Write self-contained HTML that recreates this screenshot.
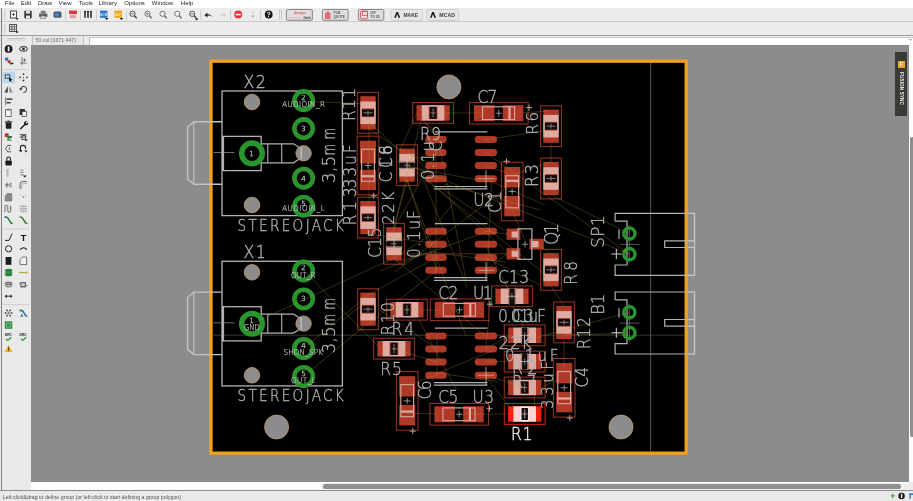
<!DOCTYPE html>
<html lang="en"><head><meta charset="utf-8"><title>EAGLE board editor</title>
<style>
html,body{margin:0;padding:0;}
body{width:913px;height:501px;overflow:hidden;background:#ebebeb;position:relative;font-family:"Liberation Sans",sans-serif;}
.abs{position:absolute;}
#menubar{left:0;top:0;width:913px;height:7.5px;background:#fff;}
#menubar span{position:absolute;top:0.2px;font-size:6px;line-height:7px;color:#1e1e1e;white-space:nowrap;}
#tb1{left:0;top:7.5px;width:913px;height:13.6px;background:#ececec;border-bottom:0.8px solid #c9c9c9;}
#tb2{left:0;top:21.9px;width:913px;height:13px;background:#ececec;border-bottom:1px solid #9f9f9f;}
#cmdrow{left:0;top:35.9px;width:913px;height:9.3px;background:#ececec;}
#coord{left:31.5px;top:36.4px;width:49.5px;height:8.8px;background:#e6e6e6;border-left:0.6px solid #c2c2c2;border-right:0.6px solid #c2c2c2;}
#coord span{position:absolute;left:2.6px;top:1.3px;font-size:5.2px;line-height:7px;color:#6a6a6a;white-space:nowrap;}
#cmd{left:89px;top:36.6px;width:824px;height:8.6px;background:#fff;border-left:0.8px solid #bcbcbc;border-top:0.6px solid #c8c8c8;box-sizing:border-box;}
#left{left:0;top:35.9px;width:31px;height:454.3px;background:#e9e9e9;}
#canvas{left:31px;top:45.2px;width:877.5px;height:436.7px;background:#8c8c8c;}
#vscroll{left:908.5px;top:45.2px;width:4.5px;height:436.7px;background:#fdfdfd;}
#vthumb{left:910.3px;top:137px;width:2.7px;height:300.3px;background:#909090;border-radius:2px 0 0 2px;}
#hscroll{left:31px;top:481.9px;width:877.5px;height:8.4px;background:#fdfdfd;}
#htrack{left:321.5px;top:482.6px;width:587px;height:7.2px;background:#eeeeee;}
#hthumb{left:322.8px;top:484.4px;width:577.8px;height:4.3px;background:#8f8f8f;border-radius:2.2px;}
#status{left:0;top:489.9px;width:913px;height:11.1px;background:#e9e9e9;border-top:0.9px solid #8e8e8e;box-sizing:border-box;}
#lborder{left:0.7px;top:8px;width:0.9px;height:482px;background:#7e7e7e;}
#status span{position:absolute;left:2.8px;top:2.9px;font-size:5.28px;line-height:7px;color:#555;white-space:nowrap;}
#fusion{left:894.8px;top:52.3px;width:12px;height:64.4px;background:#393935;}
#fusion i{position:absolute;left:2.8px;top:8.6px;width:7.2px;height:7px;background:#f0a324;}
#fusion i b{position:absolute;left:1.8px;top:0.2px;font-size:5.6px;line-height:7px;color:#fff4dc;font-style:normal;font-weight:bold;}
#fusion span{position:absolute;left:6.3px;top:19.5px;transform-origin:0 0;transform:rotate(90deg) translate(0,-50%);font-size:4.6px;line-height:5px;font-weight:bold;color:#f4f4f4;white-space:nowrap;letter-spacing:0.15px;}
svg{position:absolute;left:0;top:0;will-change:transform;}
#menubar,#coord,#status,#fusion{will-change:transform;}
svg text.v{font-family:"DejaVu Sans Light","DejaVu Sans","Liberation Sans",sans-serif;font-weight:200;stroke-width:0.35px;}
svg text.s{font-family:"DejaVu Sans Light","DejaVu Sans","Liberation Sans",sans-serif;font-weight:200;stroke-width:0.25px;}
svg text.u{font-family:"Liberation Sans",sans-serif;}
</style></head>
<body>
<div id="menubar" class="abs">
<span style="left:4.8px">File</span><span style="left:20.8px">Edit</span><span style="left:38px">Draw</span><span style="left:58.6px">View</span><span style="left:78.8px">Tools</span><span style="left:98.6px">Library</span><span style="left:124.2px">Options</span><span style="left:151.8px">Window</span><span style="left:180.8px">Help</span>
</div>
<div id="tb1" class="abs"></div>
<div id="tb2" class="abs"></div>
<div id="cmdrow" class="abs"></div>
<div id="coord" class="abs"><span>50 mil (1671 447)</span></div>
<div id="cmd" class="abs"></div>
<div id="left" class="abs"></div><div id="lborder" class="abs"></div>
<div id="canvas" class="abs"></div>
<div id="vscroll" class="abs"></div><div id="vthumb" class="abs"></div>
<div id="hscroll" class="abs"></div><div id="htrack" class="abs"></div><div id="hthumb" class="abs"></div>
<div id="status" class="abs"><span>Left-click&amp;drag to define group (or left-click to start defining a group polygon)</span></div>
<svg id="board" width="913" height="501" viewBox="0 0 913 501">
<rect x="211" y="61.2" width="475.2" height="392" fill="#000" stroke="#f2a01e" stroke-width="3.3"/>
<line x1="650.6" y1="63.0" x2="650.6" y2="451.5" stroke="#8a8a8a" stroke-width="0.6"/>
<line x1="213.0" y1="335.2" x2="684.5" y2="335.2" stroke="#5a5a52" stroke-width="0.6"/>
<line x1="394.0" y1="253.8" x2="513.0" y2="253.8" stroke="#a85a30" stroke-width="0.6" opacity="0.8"/>
<circle cx="448.9" cy="86.9" r="12" fill="#8c8c8c" stroke="#c89a68" stroke-width="0.8"/>
<circle cx="276.6" cy="427.0" r="12" fill="#8c8c8c" stroke="#c89a68" stroke-width="0.8"/>
<circle cx="621.0" cy="427.0" r="12" fill="#8c8c8c" stroke="#c89a68" stroke-width="0.8"/>
<polyline points="222.0,121.8 194.0,121.8 187.6,127.0 187.6,179.0 194.0,184.3 222.0,184.3" fill="none" stroke="#c4c4c4" stroke-width="1.4"/>
<line x1="193.8" y1="122.5" x2="193.8" y2="183.8" stroke="#c4c4c4" stroke-width="1.1"/>
<rect x="222.0" y="91.0" width="120.4" height="124.6" fill="none" stroke="#b2b2b2" stroke-width="1.3"/>
<line x1="223.3" y1="136.0" x2="223.3" y2="171.0" stroke="#b2b2b2" stroke-width="1.6"/>
<rect x="222.6" y="136.4" width="38.6" height="34.2" fill="none" stroke="#b2b2b2" stroke-width="1.3"/>
<polyline points="261.2,143.8 293.5,143.8 300.0,148.0" fill="none" stroke="#b2b2b2" stroke-width="1.2"/>
<polyline points="261.2,162.8 293.5,162.8 300.0,158.6" fill="none" stroke="#b2b2b2" stroke-width="1.2"/>
<line x1="267.8" y1="143.8" x2="267.8" y2="162.8" stroke="#b2b2b2" stroke-width="1.1"/>
<line x1="281.7" y1="143.8" x2="281.7" y2="162.8" stroke="#b2b2b2" stroke-width="1.1"/>
<line x1="213.5" y1="152.5" x2="234.5" y2="152.5" stroke="#b2b2b2" stroke-width="0.6"/>
<circle cx="252.0" cy="102.0" r="7.8" fill="#8c8c8c" stroke="#c89a68" stroke-width="0.8"/>
<circle cx="252.0" cy="205.0" r="7.8" fill="#8c8c8c" stroke="#c89a68" stroke-width="0.8"/>
<circle cx="303.6" cy="153.3" r="7.7" fill="#8c8c8c" stroke="#c89a68" stroke-width="0.8"/>
<line x1="301.2" y1="147.0" x2="301.2" y2="159.6" stroke="#c8c8c8" stroke-width="1.2"/>
<circle cx="252.0" cy="153.4" r="10.3" fill="none" stroke="#2a952d" stroke-width="5.5"/>
<circle cx="303.6" cy="100.6" r="9.2" fill="none" stroke="#2a952d" stroke-width="4.6"/>
<circle cx="303.6" cy="128.6" r="9.2" fill="none" stroke="#2a952d" stroke-width="4.6"/>
<circle cx="303.6" cy="178.2" r="9.2" fill="none" stroke="#2a952d" stroke-width="4.6"/>
<circle cx="303.6" cy="206.2" r="9.2" fill="none" stroke="#2a952d" stroke-width="4.6"/>
<text class="s" x="251.6" y="155.9" font-size="7" text-anchor="middle" fill="#cdcdcd" stroke="#cdcdcd">1</text>
<text class="s" x="303.6" y="100.1" font-size="7" text-anchor="middle" fill="#cdcdcd" stroke="#cdcdcd">2</text>
<text class="s" x="303.6" y="131.1" font-size="7" text-anchor="middle" fill="#cdcdcd" stroke="#cdcdcd">3</text>
<text class="s" x="303.6" y="180.7" font-size="7" text-anchor="middle" fill="#cdcdcd" stroke="#cdcdcd">4</text>
<text class="s" x="303.6" y="205.7" font-size="7" text-anchor="middle" fill="#cdcdcd" stroke="#cdcdcd">5</text>
<text class="v" transform="translate(244.5,88.0) scale(0.9,1)" x="-1.1" font-size="17.6" fill="#b2b2b2" stroke="#b2b2b2" textLength="24.9" lengthAdjust="spacing">X2</text>
<text class="v" transform="translate(238.4,230.8) scale(0.9,1)" x="-0.9" font-size="15.2" fill="#b2b2b2" stroke="#b2b2b2" textLength="118.0" lengthAdjust="spacing">STEREOJACK</text>
<text class="v" transform="translate(335.4,182.0) rotate(-90) scale(0.9,1)" x="-1.1" font-size="18.1" fill="#b2b2b2" stroke="#b2b2b2" textLength="30.0" lengthAdjust="spacing">3,5</text>
<text class="v" transform="translate(335.4,154.8) rotate(-90) scale(0.66,1)" x="-1.1" font-size="18.1" fill="#b2b2b2" stroke="#b2b2b2" textLength="42.0" lengthAdjust="spacing">mm</text>
<text class="s" transform="translate(282.6,107.3) scale(0.9,1)" x="-0.5" font-size="8.0" fill="#b4b8b4" stroke="#b4b8b4" textLength="47.5" lengthAdjust="spacing">AUDIOIN_R</text>
<text class="s" transform="translate(282.6,211.3) scale(0.9,1)" x="-0.5" font-size="8.0" fill="#b4b8b4" stroke="#b4b8b4" textLength="47.5" lengthAdjust="spacing">AUDIOIN_L</text>
<polyline points="222.0,292.1 194.0,292.1 187.6,297.3 187.6,349.3 194.0,354.6 222.0,354.6" fill="none" stroke="#c4c4c4" stroke-width="1.4"/>
<line x1="193.8" y1="292.8" x2="193.8" y2="354.1" stroke="#c4c4c4" stroke-width="1.1"/>
<rect x="222.0" y="261.3" width="120.4" height="124.6" fill="none" stroke="#b2b2b2" stroke-width="1.3"/>
<line x1="223.3" y1="306.3" x2="223.3" y2="341.3" stroke="#b2b2b2" stroke-width="1.6"/>
<rect x="222.6" y="306.7" width="38.6" height="34.2" fill="none" stroke="#b2b2b2" stroke-width="1.3"/>
<polyline points="261.2,314.1 293.5,314.1 300.0,318.3" fill="none" stroke="#b2b2b2" stroke-width="1.2"/>
<polyline points="261.2,333.1 293.5,333.1 300.0,328.9" fill="none" stroke="#b2b2b2" stroke-width="1.2"/>
<line x1="267.8" y1="314.1" x2="267.8" y2="333.1" stroke="#b2b2b2" stroke-width="1.1"/>
<line x1="281.7" y1="314.1" x2="281.7" y2="333.1" stroke="#b2b2b2" stroke-width="1.1"/>
<line x1="213.5" y1="322.8" x2="234.5" y2="322.8" stroke="#b2b2b2" stroke-width="0.6"/>
<circle cx="252.0" cy="272.3" r="7.8" fill="#8c8c8c" stroke="#c89a68" stroke-width="0.8"/>
<circle cx="252.0" cy="375.3" r="7.8" fill="#8c8c8c" stroke="#c89a68" stroke-width="0.8"/>
<circle cx="303.6" cy="323.6" r="7.7" fill="#8c8c8c" stroke="#c89a68" stroke-width="0.8"/>
<line x1="301.2" y1="317.3" x2="301.2" y2="329.9" stroke="#c8c8c8" stroke-width="1.2"/>
<circle cx="252.0" cy="323.7" r="10.3" fill="none" stroke="#2a952d" stroke-width="5.5"/>
<circle cx="303.6" cy="270.9" r="9.2" fill="none" stroke="#2a952d" stroke-width="4.6"/>
<circle cx="303.6" cy="298.9" r="9.2" fill="none" stroke="#2a952d" stroke-width="4.6"/>
<circle cx="303.6" cy="348.5" r="9.2" fill="none" stroke="#2a952d" stroke-width="4.6"/>
<circle cx="303.6" cy="376.5" r="9.2" fill="none" stroke="#2a952d" stroke-width="4.6"/>
<text class="s" x="251.6" y="323.2" font-size="7" text-anchor="middle" fill="#cdcdcd" stroke="#cdcdcd">1</text>
<text class="s" x="303.6" y="270.4" font-size="7" text-anchor="middle" fill="#cdcdcd" stroke="#cdcdcd">2</text>
<text class="s" x="303.6" y="301.4" font-size="7" text-anchor="middle" fill="#cdcdcd" stroke="#cdcdcd">3</text>
<text class="s" x="303.6" y="348.0" font-size="7" text-anchor="middle" fill="#cdcdcd" stroke="#cdcdcd">4</text>
<text class="s" x="303.6" y="376.0" font-size="7" text-anchor="middle" fill="#cdcdcd" stroke="#cdcdcd">5</text>
<text class="v" transform="translate(244.5,258.3) scale(0.9,1)" x="-1.1" font-size="17.6" fill="#b2b2b2" stroke="#b2b2b2" textLength="24.9" lengthAdjust="spacing">X1</text>
<text class="v" transform="translate(238.4,401.1) scale(0.9,1)" x="-0.9" font-size="15.2" fill="#b2b2b2" stroke="#b2b2b2" textLength="118.0" lengthAdjust="spacing">STEREOJACK</text>
<text class="v" transform="translate(335.4,352.3) rotate(-90) scale(0.9,1)" x="-1.1" font-size="18.1" fill="#b2b2b2" stroke="#b2b2b2" textLength="30.0" lengthAdjust="spacing">3,5</text>
<text class="v" transform="translate(335.4,325.1) rotate(-90) scale(0.66,1)" x="-1.1" font-size="18.1" fill="#b2b2b2" stroke="#b2b2b2" textLength="42.0" lengthAdjust="spacing">mm</text>
<text class="s" transform="translate(291.5,278.1) scale(0.9,1)" x="-0.5" font-size="8.0" fill="#b4b8b4" stroke="#b4b8b4" textLength="27.1" lengthAdjust="spacing">OUT_R</text>
<text class="s" transform="translate(244.5,330.4) scale(0.9,1)" x="-0.5" font-size="8.0" fill="#b4b8b4" stroke="#b4b8b4" textLength="17.6" lengthAdjust="spacing">GND</text>
<text class="s" transform="translate(284.0,354.5) scale(0.9,1)" x="-0.5" font-size="8.0" fill="#b4b8b4" stroke="#b4b8b4" textLength="43.7" lengthAdjust="spacing">SHDN_SPK</text>
<text class="s" transform="translate(291.5,382.5) scale(0.9,1)" x="-0.5" font-size="8.0" fill="#b4b8b4" stroke="#b4b8b4" textLength="27.1" lengthAdjust="spacing">OUT_L</text>
<polyline points="615.1,221.2 615.1,213.3 694.5,213.3 694.5,275.3 615.1,275.3 615.1,265.0 627.0,265.0 627.0,221.2 615.1,221.2" fill="none" stroke="#b2b2b2" stroke-width="1.2"/>
<polyline points="694.5,240.8 664.7,240.8 664.7,247.5 694.5,247.5" fill="none" stroke="#b2b2b2" stroke-width="1.2"/>
<line x1="689.4" y1="240.8" x2="689.4" y2="247.5" stroke="#a8a8a8" stroke-width="0.8"/>
<polyline points="687.8,213.3 694.5,213.3 694.5,275.3 687.8,275.3" fill="none" stroke="#c6c6c6" stroke-width="1.2"/>
<line x1="687.8" y1="240.8" x2="694.5" y2="240.8" stroke="#c6c6c6" stroke-width="1.2"/>
<line x1="687.8" y1="247.5" x2="694.5" y2="247.5" stroke="#c6c6c6" stroke-width="1.2"/>
<line x1="620.0" y1="244.4" x2="639.6" y2="244.4" stroke="#8a8a8a" stroke-width="0.6"/>
<line x1="629.4" y1="225.0" x2="629.4" y2="263.0" stroke="#8a8a8a" stroke-width="0.6"/>
<circle cx="629.4" cy="233.6" r="5.6" fill="none" stroke="#2a952d" stroke-width="3.5"/>
<circle cx="629.4" cy="254.2" r="5.6" fill="none" stroke="#2a952d" stroke-width="3.5"/>
<line x1="619.0" y1="229.5" x2="619.0" y2="239.0" stroke="#b2b2b2" stroke-width="1.2"/>
<line x1="611.5" y1="254.0" x2="621.5" y2="254.0" stroke="#b2b2b2" stroke-width="1.2"/>
<line x1="616.4" y1="249.0" x2="616.4" y2="259.0" stroke="#b2b2b2" stroke-width="1.2"/>
<polyline points="615.1,299.9 615.1,292.0 694.5,292.0 694.5,354.0 615.1,354.0 615.1,343.7 627.0,343.7 627.0,299.9 615.1,299.9" fill="none" stroke="#b2b2b2" stroke-width="1.2"/>
<polyline points="694.5,319.5 664.7,319.5 664.7,326.2 694.5,326.2" fill="none" stroke="#b2b2b2" stroke-width="1.2"/>
<line x1="689.4" y1="319.5" x2="689.4" y2="326.2" stroke="#a8a8a8" stroke-width="0.8"/>
<polyline points="687.8,292.0 694.5,292.0 694.5,354.0 687.8,354.0" fill="none" stroke="#c6c6c6" stroke-width="1.2"/>
<line x1="687.8" y1="319.5" x2="694.5" y2="319.5" stroke="#c6c6c6" stroke-width="1.2"/>
<line x1="687.8" y1="326.2" x2="694.5" y2="326.2" stroke="#c6c6c6" stroke-width="1.2"/>
<line x1="620.0" y1="323.1" x2="639.6" y2="323.1" stroke="#8a8a8a" stroke-width="0.6"/>
<line x1="629.4" y1="303.7" x2="629.4" y2="341.7" stroke="#8a8a8a" stroke-width="0.6"/>
<circle cx="629.4" cy="312.3" r="5.6" fill="none" stroke="#2a952d" stroke-width="3.5"/>
<circle cx="629.4" cy="332.9" r="5.6" fill="none" stroke="#2a952d" stroke-width="3.5"/>
<line x1="619.0" y1="308.2" x2="619.0" y2="317.7" stroke="#b2b2b2" stroke-width="1.2"/>
<line x1="611.5" y1="332.7" x2="621.5" y2="332.7" stroke="#b2b2b2" stroke-width="1.2"/>
<line x1="616.4" y1="327.7" x2="616.4" y2="337.7" stroke="#b2b2b2" stroke-width="1.2"/>
<rect x="425.3" y="136.1" width="21.3" height="7.0" fill="#b03826" rx="3"/>
<rect x="474.8" y="136.1" width="22.2" height="7.0" fill="#b03826" rx="3"/>
<rect x="425.3" y="149.0" width="21.3" height="7.0" fill="#b03826" rx="3"/>
<rect x="474.8" y="149.0" width="22.2" height="7.0" fill="#b03826" rx="3"/>
<rect x="425.3" y="162.0" width="21.3" height="7.0" fill="#b03826" rx="3"/>
<rect x="474.8" y="162.0" width="22.2" height="7.0" fill="#b03826" rx="3"/>
<rect x="425.3" y="175.2" width="21.3" height="7.0" fill="#b03826" rx="3"/>
<rect x="474.8" y="175.2" width="22.2" height="7.0" fill="#b03826" rx="3"/>
<line x1="435.0" y1="131.9" x2="487.4" y2="131.9" stroke="#b2b2b2" stroke-width="1.4"/>
<line x1="434.0" y1="186.5" x2="487.4" y2="186.5" stroke="#b2b2b2" stroke-width="1.2"/>
<line x1="434.0" y1="188.9" x2="487.4" y2="188.9" stroke="#b2b2b2" stroke-width="1.2"/>
<line x1="477.6" y1="178.7" x2="494.4" y2="178.7" stroke="#c9b0a8" stroke-width="0.8"/>
<line x1="486.0" y1="170.2" x2="486.0" y2="188.9" stroke="#c0c0c0" stroke-width="0.8"/>
<rect x="425.3" y="227.7" width="21.3" height="7.0" fill="#b03826" rx="3"/>
<rect x="474.8" y="227.7" width="22.2" height="7.0" fill="#b03826" rx="3"/>
<rect x="425.3" y="240.8" width="21.3" height="7.0" fill="#b03826" rx="3"/>
<rect x="474.8" y="240.8" width="22.2" height="7.0" fill="#b03826" rx="3"/>
<rect x="425.3" y="253.9" width="21.3" height="7.0" fill="#b03826" rx="3"/>
<rect x="474.8" y="253.9" width="22.2" height="7.0" fill="#b03826" rx="3"/>
<rect x="425.3" y="266.8" width="21.3" height="7.0" fill="#b03826" rx="3"/>
<rect x="474.8" y="266.8" width="22.2" height="7.0" fill="#b03826" rx="3"/>
<line x1="435.0" y1="223.6" x2="487.4" y2="223.6" stroke="#b2b2b2" stroke-width="1.4"/>
<line x1="434.0" y1="277.7" x2="487.4" y2="277.7" stroke="#b2b2b2" stroke-width="1.2"/>
<line x1="434.0" y1="280.4" x2="487.4" y2="280.4" stroke="#b2b2b2" stroke-width="1.2"/>
<line x1="477.6" y1="270.3" x2="494.4" y2="270.3" stroke="#c9b0a8" stroke-width="0.8"/>
<line x1="486.0" y1="261.8" x2="486.0" y2="280.4" stroke="#c0c0c0" stroke-width="0.8"/>
<rect x="425.3" y="332.5" width="21.3" height="7.0" fill="#b03826" rx="3"/>
<rect x="474.8" y="332.5" width="22.2" height="7.0" fill="#b03826" rx="3"/>
<rect x="425.3" y="345.4" width="21.3" height="7.0" fill="#b03826" rx="3"/>
<rect x="474.8" y="345.4" width="22.2" height="7.0" fill="#b03826" rx="3"/>
<rect x="425.3" y="358.5" width="21.3" height="7.0" fill="#b03826" rx="3"/>
<rect x="474.8" y="358.5" width="22.2" height="7.0" fill="#b03826" rx="3"/>
<rect x="425.3" y="371.7" width="21.3" height="7.0" fill="#b03826" rx="3"/>
<rect x="474.8" y="371.7" width="22.2" height="7.0" fill="#b03826" rx="3"/>
<line x1="435.0" y1="328.1" x2="487.4" y2="328.1" stroke="#b2b2b2" stroke-width="1.4"/>
<line x1="434.0" y1="382.7" x2="487.4" y2="382.7" stroke="#b2b2b2" stroke-width="1.2"/>
<line x1="434.0" y1="385.1" x2="487.4" y2="385.1" stroke="#b2b2b2" stroke-width="1.2"/>
<line x1="477.6" y1="375.2" x2="494.4" y2="375.2" stroke="#c9b0a8" stroke-width="0.8"/>
<line x1="486.0" y1="366.7" x2="486.0" y2="385.1" stroke="#c0c0c0" stroke-width="0.8"/>
<rect x="506.5" y="228.6" width="13.9" height="11.2" fill="#b03826"/>
<rect x="506.5" y="248.2" width="13.9" height="11.2" fill="#b03826"/>
<rect x="529.4" y="238.8" width="14.4" height="10.8" fill="#b03826"/>
<rect x="511.6" y="231.5" width="6.4" height="6.0" fill="#dfaaa0"/>
<rect x="511.6" y="250.8" width="6.4" height="6.0" fill="#dfaaa0"/>
<rect x="531.5" y="241.0" width="7.0" height="6.4" fill="#dfaaa0"/>
<rect x="517.9" y="228.8" width="14.0" height="30.5" fill="none" stroke="#b2b2b2" stroke-width="1.2"/>
<line x1="522.0" y1="244.2" x2="528.0" y2="244.2" stroke="#c0c0c0" stroke-width="0.7"/>
<line x1="525.0" y1="241.0" x2="525.0" y2="247.5" stroke="#c0c0c0" stroke-width="0.7"/>
<rect x="360.3" y="96.2" width="15.4" height="33.2" fill="#b03826"/>
<rect x="360.3" y="101.5" width="15.4" height="22.6" fill="#dfaaa0"/>
<rect x="361.6" y="108.5" width="12.8" height="8.6" fill="#9a3a2a"/>
<rect x="361.6" y="109.4" width="12.8" height="6.8" fill="#160a08"/>
<line x1="361.3" y1="108.6" x2="361.3" y2="117.0" stroke="#bcbcc0" stroke-width="0.9"/>
<line x1="374.7" y1="108.6" x2="374.7" y2="117.0" stroke="#bcbcc0" stroke-width="0.9"/>
<line x1="363.4" y1="112.8" x2="372.6" y2="112.8" stroke="#a8a8a8" stroke-width="0.7"/>
<line x1="368.0" y1="110.4" x2="368.0" y2="115.2" stroke="#a8a8a8" stroke-width="0.7"/>
<rect x="357.6" y="92.4" width="20.8" height="40.8" fill="none" stroke="#8c3022" stroke-width="1.1"/>
<rect x="360.3" y="201.0" width="15.4" height="33.2" fill="#b03826"/>
<rect x="360.3" y="206.3" width="15.4" height="22.6" fill="#dfaaa0"/>
<rect x="361.6" y="213.3" width="12.8" height="8.6" fill="#9a3a2a"/>
<rect x="361.6" y="214.2" width="12.8" height="6.8" fill="#160a08"/>
<line x1="361.3" y1="213.4" x2="361.3" y2="221.8" stroke="#bcbcc0" stroke-width="0.9"/>
<line x1="374.7" y1="213.4" x2="374.7" y2="221.8" stroke="#bcbcc0" stroke-width="0.9"/>
<line x1="363.4" y1="217.6" x2="372.6" y2="217.6" stroke="#a8a8a8" stroke-width="0.7"/>
<line x1="368.0" y1="215.2" x2="368.0" y2="220.0" stroke="#a8a8a8" stroke-width="0.7"/>
<rect x="357.6" y="197.2" width="20.8" height="40.8" fill="none" stroke="#8c3022" stroke-width="1.1"/>
<rect x="399.3" y="148.6" width="15.4" height="33.2" fill="#b03826"/>
<rect x="399.3" y="153.9" width="15.4" height="22.6" fill="#dfaaa0"/>
<rect x="399.3" y="161.4" width="15.4" height="7.6" fill="#9a3a2a"/>
<rect x="399.3" y="162.1" width="15.4" height="6.2" fill="#160a08"/>
<line x1="398.7" y1="162.1" x2="415.3" y2="162.1" stroke="#b8b8bc" stroke-width="0.8"/>
<line x1="398.7" y1="168.3" x2="415.3" y2="168.3" stroke="#b8b8bc" stroke-width="0.8"/>
<line x1="407.0" y1="159.7" x2="407.0" y2="170.7" stroke="#d8d8d8" stroke-width="0.7"/>
<line x1="404.0" y1="165.2" x2="410.0" y2="165.2" stroke="#a8a8a8" stroke-width="0.7"/>
<rect x="396.6" y="144.8" width="20.8" height="40.8" fill="none" stroke="#8c3022" stroke-width="1.1"/>
<rect x="386.3" y="227.2" width="15.4" height="33.2" fill="#b03826"/>
<rect x="386.3" y="232.5" width="15.4" height="22.6" fill="#dfaaa0"/>
<rect x="386.3" y="240.0" width="15.4" height="7.6" fill="#9a3a2a"/>
<rect x="386.3" y="240.7" width="15.4" height="6.2" fill="#160a08"/>
<line x1="385.7" y1="240.7" x2="402.3" y2="240.7" stroke="#b8b8bc" stroke-width="0.8"/>
<line x1="385.7" y1="246.9" x2="402.3" y2="246.9" stroke="#b8b8bc" stroke-width="0.8"/>
<line x1="394.0" y1="238.3" x2="394.0" y2="249.3" stroke="#d8d8d8" stroke-width="0.7"/>
<line x1="391.0" y1="243.8" x2="397.0" y2="243.8" stroke="#a8a8a8" stroke-width="0.7"/>
<rect x="383.6" y="223.4" width="20.8" height="40.8" fill="none" stroke="#8c3022" stroke-width="1.1"/>
<rect x="360.3" y="292.6" width="15.4" height="33.2" fill="#b03826"/>
<rect x="360.3" y="297.9" width="15.4" height="22.6" fill="#dfaaa0"/>
<rect x="361.6" y="304.9" width="12.8" height="8.6" fill="#9a3a2a"/>
<rect x="361.6" y="305.8" width="12.8" height="6.8" fill="#160a08"/>
<line x1="361.3" y1="305.0" x2="361.3" y2="313.4" stroke="#bcbcc0" stroke-width="0.9"/>
<line x1="374.7" y1="305.0" x2="374.7" y2="313.4" stroke="#bcbcc0" stroke-width="0.9"/>
<line x1="363.4" y1="309.2" x2="372.6" y2="309.2" stroke="#a8a8a8" stroke-width="0.7"/>
<line x1="368.0" y1="306.8" x2="368.0" y2="311.6" stroke="#a8a8a8" stroke-width="0.7"/>
<rect x="357.6" y="288.8" width="20.8" height="40.8" fill="none" stroke="#8c3022" stroke-width="1.1"/>
<rect x="543.3" y="109.6" width="15.4" height="33.2" fill="#b03826"/>
<rect x="543.3" y="114.9" width="15.4" height="22.6" fill="#dfaaa0"/>
<rect x="544.6" y="121.9" width="12.8" height="8.6" fill="#9a3a2a"/>
<rect x="544.6" y="122.8" width="12.8" height="6.8" fill="#160a08"/>
<line x1="544.3" y1="122.0" x2="544.3" y2="130.4" stroke="#bcbcc0" stroke-width="0.9"/>
<line x1="557.7" y1="122.0" x2="557.7" y2="130.4" stroke="#bcbcc0" stroke-width="0.9"/>
<line x1="546.4" y1="126.2" x2="555.6" y2="126.2" stroke="#a8a8a8" stroke-width="0.7"/>
<line x1="551.0" y1="123.8" x2="551.0" y2="128.6" stroke="#a8a8a8" stroke-width="0.7"/>
<rect x="540.6" y="105.8" width="20.8" height="40.8" fill="none" stroke="#8c3022" stroke-width="1.1"/>
<rect x="543.3" y="161.9" width="15.4" height="33.2" fill="#b03826"/>
<rect x="543.3" y="167.2" width="15.4" height="22.6" fill="#dfaaa0"/>
<rect x="544.6" y="174.2" width="12.8" height="8.6" fill="#9a3a2a"/>
<rect x="544.6" y="175.1" width="12.8" height="6.8" fill="#160a08"/>
<line x1="544.3" y1="174.3" x2="544.3" y2="182.7" stroke="#bcbcc0" stroke-width="0.9"/>
<line x1="557.7" y1="174.3" x2="557.7" y2="182.7" stroke="#bcbcc0" stroke-width="0.9"/>
<line x1="546.4" y1="178.5" x2="555.6" y2="178.5" stroke="#a8a8a8" stroke-width="0.7"/>
<line x1="551.0" y1="176.1" x2="551.0" y2="180.9" stroke="#a8a8a8" stroke-width="0.7"/>
<rect x="540.6" y="158.1" width="20.8" height="40.8" fill="none" stroke="#8c3022" stroke-width="1.1"/>
<rect x="543.3" y="253.2" width="15.4" height="33.2" fill="#b03826"/>
<rect x="543.3" y="258.5" width="15.4" height="22.6" fill="#dfaaa0"/>
<rect x="544.6" y="265.5" width="12.8" height="8.6" fill="#9a3a2a"/>
<rect x="544.6" y="266.4" width="12.8" height="6.8" fill="#160a08"/>
<line x1="544.3" y1="265.6" x2="544.3" y2="274.0" stroke="#bcbcc0" stroke-width="0.9"/>
<line x1="557.7" y1="265.6" x2="557.7" y2="274.0" stroke="#bcbcc0" stroke-width="0.9"/>
<line x1="546.4" y1="269.8" x2="555.6" y2="269.8" stroke="#a8a8a8" stroke-width="0.7"/>
<line x1="551.0" y1="267.4" x2="551.0" y2="272.2" stroke="#a8a8a8" stroke-width="0.7"/>
<rect x="540.6" y="249.4" width="20.8" height="40.8" fill="none" stroke="#8c3022" stroke-width="1.1"/>
<rect x="556.3" y="305.8" width="15.4" height="33.2" fill="#b03826"/>
<rect x="556.3" y="311.1" width="15.4" height="22.6" fill="#dfaaa0"/>
<rect x="557.6" y="318.1" width="12.8" height="8.6" fill="#9a3a2a"/>
<rect x="557.6" y="319.0" width="12.8" height="6.8" fill="#160a08"/>
<line x1="557.3" y1="318.2" x2="557.3" y2="326.6" stroke="#bcbcc0" stroke-width="0.9"/>
<line x1="570.7" y1="318.2" x2="570.7" y2="326.6" stroke="#bcbcc0" stroke-width="0.9"/>
<line x1="559.4" y1="322.4" x2="568.6" y2="322.4" stroke="#a8a8a8" stroke-width="0.7"/>
<line x1="564.0" y1="320.0" x2="564.0" y2="324.8" stroke="#a8a8a8" stroke-width="0.7"/>
<rect x="553.6" y="302.0" width="20.8" height="40.8" fill="none" stroke="#8c3022" stroke-width="1.1"/>
<rect x="416.5" y="105.2" width="33.2" height="15.4" fill="#b03826"/>
<rect x="421.8" y="105.2" width="22.6" height="15.4" fill="#dfaaa0"/>
<rect x="428.8" y="106.5" width="8.6" height="12.8" fill="#9a3a2a"/>
<rect x="429.7" y="106.5" width="6.8" height="12.8" fill="#160a08"/>
<line x1="428.9" y1="106.2" x2="437.3" y2="106.2" stroke="#bcbcc0" stroke-width="0.9"/>
<line x1="428.9" y1="119.6" x2="437.3" y2="119.6" stroke="#bcbcc0" stroke-width="0.9"/>
<line x1="433.1" y1="108.3" x2="433.1" y2="117.5" stroke="#a8a8a8" stroke-width="0.7"/>
<line x1="430.7" y1="112.9" x2="435.5" y2="112.9" stroke="#a8a8a8" stroke-width="0.7"/>
<rect x="412.7" y="102.5" width="40.8" height="20.8" fill="none" stroke="#8c3022" stroke-width="1.1"/>
<rect x="390.4" y="302.0" width="33.2" height="15.4" fill="#b03826"/>
<rect x="395.7" y="302.0" width="22.6" height="15.4" fill="#dfaaa0"/>
<rect x="402.7" y="303.3" width="8.6" height="12.8" fill="#9a3a2a"/>
<rect x="403.6" y="303.3" width="6.8" height="12.8" fill="#160a08"/>
<line x1="402.8" y1="303.0" x2="411.2" y2="303.0" stroke="#bcbcc0" stroke-width="0.9"/>
<line x1="402.8" y1="316.4" x2="411.2" y2="316.4" stroke="#bcbcc0" stroke-width="0.9"/>
<line x1="407.0" y1="305.1" x2="407.0" y2="314.3" stroke="#a8a8a8" stroke-width="0.7"/>
<line x1="404.6" y1="309.7" x2="409.4" y2="309.7" stroke="#a8a8a8" stroke-width="0.7"/>
<rect x="386.6" y="299.3" width="40.8" height="20.8" fill="none" stroke="#8c3022" stroke-width="1.1"/>
<rect x="377.4" y="341.0" width="33.2" height="15.4" fill="#b03826"/>
<rect x="382.7" y="341.0" width="22.6" height="15.4" fill="#dfaaa0"/>
<rect x="389.7" y="342.3" width="8.6" height="12.8" fill="#9a3a2a"/>
<rect x="390.6" y="342.3" width="6.8" height="12.8" fill="#160a08"/>
<line x1="389.8" y1="342.0" x2="398.2" y2="342.0" stroke="#bcbcc0" stroke-width="0.9"/>
<line x1="389.8" y1="355.4" x2="398.2" y2="355.4" stroke="#bcbcc0" stroke-width="0.9"/>
<line x1="394.0" y1="344.1" x2="394.0" y2="353.3" stroke="#a8a8a8" stroke-width="0.7"/>
<line x1="391.6" y1="348.7" x2="396.4" y2="348.7" stroke="#a8a8a8" stroke-width="0.7"/>
<rect x="373.6" y="338.3" width="40.8" height="20.8" fill="none" stroke="#8c3022" stroke-width="1.1"/>
<rect x="495.4" y="288.6" width="33.2" height="15.4" fill="#b03826"/>
<rect x="500.7" y="288.6" width="22.6" height="15.4" fill="#dfaaa0"/>
<rect x="508.2" y="288.6" width="7.6" height="15.4" fill="#9a3a2a"/>
<rect x="508.9" y="288.6" width="6.2" height="15.4" fill="#160a08"/>
<line x1="508.9" y1="288.0" x2="508.9" y2="304.6" stroke="#b8b8bc" stroke-width="0.8"/>
<line x1="515.1" y1="288.0" x2="515.1" y2="304.6" stroke="#b8b8bc" stroke-width="0.8"/>
<line x1="506.5" y1="296.3" x2="517.5" y2="296.3" stroke="#d8d8d8" stroke-width="0.7"/>
<line x1="512.0" y1="293.3" x2="512.0" y2="299.3" stroke="#a8a8a8" stroke-width="0.7"/>
<rect x="491.6" y="285.9" width="40.8" height="20.8" fill="none" stroke="#8c3022" stroke-width="1.1"/>
<rect x="508.1" y="327.6" width="33.2" height="15.4" fill="#b03826"/>
<rect x="513.4" y="327.6" width="22.6" height="15.4" fill="#dfaaa0"/>
<rect x="520.9" y="327.6" width="7.6" height="15.4" fill="#9a3a2a"/>
<rect x="521.6" y="327.6" width="6.2" height="15.4" fill="#160a08"/>
<line x1="521.6" y1="327.0" x2="521.6" y2="343.6" stroke="#b8b8bc" stroke-width="0.8"/>
<line x1="527.8" y1="327.0" x2="527.8" y2="343.6" stroke="#b8b8bc" stroke-width="0.8"/>
<line x1="519.2" y1="335.3" x2="530.2" y2="335.3" stroke="#d8d8d8" stroke-width="0.7"/>
<line x1="524.7" y1="332.3" x2="524.7" y2="338.3" stroke="#a8a8a8" stroke-width="0.7"/>
<rect x="504.3" y="324.9" width="40.8" height="20.8" fill="none" stroke="#8c3022" stroke-width="1.1"/>
<rect x="508.1" y="353.9" width="33.2" height="15.4" fill="#b03826"/>
<rect x="513.4" y="353.9" width="22.6" height="15.4" fill="#dfaaa0"/>
<rect x="520.9" y="353.9" width="7.6" height="15.4" fill="#9a3a2a"/>
<rect x="521.6" y="353.9" width="6.2" height="15.4" fill="#160a08"/>
<line x1="521.6" y1="353.3" x2="521.6" y2="369.9" stroke="#b8b8bc" stroke-width="0.8"/>
<line x1="527.8" y1="353.3" x2="527.8" y2="369.9" stroke="#b8b8bc" stroke-width="0.8"/>
<line x1="519.2" y1="361.6" x2="530.2" y2="361.6" stroke="#d8d8d8" stroke-width="0.7"/>
<line x1="524.7" y1="358.6" x2="524.7" y2="364.6" stroke="#a8a8a8" stroke-width="0.7"/>
<rect x="504.3" y="351.2" width="40.8" height="20.8" fill="none" stroke="#8c3022" stroke-width="1.1"/>
<rect x="508.1" y="379.8" width="33.2" height="15.4" fill="#b03826"/>
<rect x="513.4" y="379.8" width="22.6" height="15.4" fill="#dfaaa0"/>
<rect x="520.4" y="381.1" width="8.6" height="12.8" fill="#9a3a2a"/>
<rect x="521.3" y="381.1" width="6.8" height="12.8" fill="#160a08"/>
<line x1="520.5" y1="380.8" x2="528.9" y2="380.8" stroke="#bcbcc0" stroke-width="0.9"/>
<line x1="520.5" y1="394.2" x2="528.9" y2="394.2" stroke="#bcbcc0" stroke-width="0.9"/>
<line x1="524.7" y1="382.9" x2="524.7" y2="392.1" stroke="#a8a8a8" stroke-width="0.7"/>
<line x1="522.3" y1="387.5" x2="527.1" y2="387.5" stroke="#a8a8a8" stroke-width="0.7"/>
<rect x="504.3" y="377.1" width="40.8" height="20.8" fill="none" stroke="#8c3022" stroke-width="1.1"/>
<rect x="508.1" y="406.3" width="33.2" height="15.4" fill="#f0240d"/>
<rect x="513.4" y="406.3" width="22.6" height="15.4" fill="#f9d4d3"/>
<rect x="521.3" y="407.6" width="6.8" height="12.8" fill="#160a08"/>
<line x1="520.5" y1="407.3" x2="528.9" y2="407.3" stroke="#ffffff" stroke-width="1.3"/>
<line x1="520.5" y1="420.7" x2="528.9" y2="420.7" stroke="#ffffff" stroke-width="1.3"/>
<line x1="521.0" y1="407.3" x2="521.0" y2="420.7" stroke="#ffffff" stroke-width="0.7"/>
<line x1="528.4" y1="407.3" x2="528.4" y2="420.7" stroke="#ffffff" stroke-width="0.7"/>
<line x1="524.7" y1="409.4" x2="524.7" y2="418.6" stroke="#e0e0e0" stroke-width="0.7"/>
<line x1="522.3" y1="414.0" x2="527.1" y2="414.0" stroke="#e0e0e0" stroke-width="0.7"/>
<rect x="504.3" y="403.6" width="40.8" height="20.8" fill="none" stroke="#b4220f" stroke-width="1.1"/>
<rect x="474.0" y="105.2" width="20.4" height="16.0" fill="#b03826"/>
<rect x="502.8" y="105.2" width="20.5" height="16.0" fill="#b03826"/>
<rect x="482.5" y="106.8" width="32.1" height="12.8" fill="none" stroke="#d2a096" stroke-width="1.2"/>
<rect x="508.4" y="106.8" width="2.2" height="12.8" fill="#dfaaa0"/>
<line x1="498.8" y1="109.7" x2="498.8" y2="116.7" stroke="#c0c0c0" stroke-width="0.7"/>
<line x1="495.8" y1="113.2" x2="501.8" y2="113.2" stroke="#c0c0c0" stroke-width="0.7"/>
<rect x="469.5" y="102.4" width="58.6" height="21.6" fill="none" stroke="#8c3022" stroke-width="1.1"/>
<line x1="526.1" y1="107.6" x2="532.1" y2="107.6" stroke="#b2b2b2" stroke-width="0.9"/>
<line x1="529.1" y1="104.6" x2="529.1" y2="110.6" stroke="#b2b2b2" stroke-width="0.9"/>
<rect x="434.8" y="301.8" width="20.4" height="16.0" fill="#b03826"/>
<rect x="463.6" y="301.8" width="20.5" height="16.0" fill="#b03826"/>
<rect x="443.3" y="303.4" width="32.1" height="12.8" fill="none" stroke="#d2a096" stroke-width="1.2"/>
<rect x="469.2" y="303.4" width="2.2" height="12.8" fill="#dfaaa0"/>
<line x1="459.6" y1="306.3" x2="459.6" y2="313.3" stroke="#c0c0c0" stroke-width="0.7"/>
<line x1="456.6" y1="309.8" x2="462.6" y2="309.8" stroke="#c0c0c0" stroke-width="0.7"/>
<rect x="430.3" y="299.0" width="58.6" height="21.6" fill="none" stroke="#8c3022" stroke-width="1.1"/>
<line x1="486.9" y1="304.2" x2="492.9" y2="304.2" stroke="#b2b2b2" stroke-width="0.9"/>
<line x1="489.9" y1="301.2" x2="489.9" y2="307.2" stroke="#b2b2b2" stroke-width="0.9"/>
<rect x="434.4" y="406.3" width="20.4" height="16.0" fill="#b03826"/>
<rect x="463.2" y="406.3" width="20.5" height="16.0" fill="#b03826"/>
<rect x="442.9" y="407.9" width="32.1" height="12.8" fill="none" stroke="#d2a096" stroke-width="1.2"/>
<rect x="468.8" y="407.9" width="2.2" height="12.8" fill="#dfaaa0"/>
<line x1="459.2" y1="410.8" x2="459.2" y2="417.8" stroke="#c0c0c0" stroke-width="0.7"/>
<line x1="456.2" y1="414.3" x2="462.2" y2="414.3" stroke="#c0c0c0" stroke-width="0.7"/>
<rect x="429.9" y="403.5" width="58.6" height="21.6" fill="none" stroke="#8c3022" stroke-width="1.1"/>
<line x1="486.5" y1="408.7" x2="492.5" y2="408.7" stroke="#b2b2b2" stroke-width="0.9"/>
<line x1="489.5" y1="405.7" x2="489.5" y2="411.7" stroke="#b2b2b2" stroke-width="0.9"/>
<rect x="360.0" y="140.7" width="16.0" height="22.8" fill="#b03826"/>
<rect x="360.0" y="169.8" width="16.0" height="20.2" fill="#b03826"/>
<rect x="361.6" y="149.2" width="12.8" height="32.1" fill="none" stroke="#d2a096" stroke-width="1.2"/>
<rect x="361.6" y="175.1" width="12.8" height="2.2" fill="#dfaaa0"/>
<line x1="364.5" y1="165.5" x2="371.5" y2="165.5" stroke="#c0c0c0" stroke-width="0.7"/>
<line x1="368.0" y1="162.5" x2="368.0" y2="168.5" stroke="#c0c0c0" stroke-width="0.7"/>
<rect x="357.2" y="136.2" width="21.6" height="58.6" fill="none" stroke="#8c3022" stroke-width="1.1"/>
<line x1="370.6" y1="195.8" x2="376.6" y2="195.8" stroke="#b2b2b2" stroke-width="0.9"/>
<line x1="373.6" y1="192.8" x2="373.6" y2="198.8" stroke="#b2b2b2" stroke-width="0.9"/>
<rect x="504.2" y="195.9" width="16.0" height="20.4" fill="#b03826"/>
<rect x="504.2" y="167.0" width="16.0" height="20.5" fill="#b03826"/>
<rect x="505.8" y="175.7" width="12.8" height="32.1" fill="none" stroke="#d2a096" stroke-width="1.2"/>
<rect x="505.8" y="179.7" width="12.8" height="2.2" fill="#dfaaa0"/>
<line x1="508.7" y1="191.5" x2="515.7" y2="191.5" stroke="#c0c0c0" stroke-width="0.7"/>
<line x1="512.2" y1="188.5" x2="512.2" y2="194.5" stroke="#c0c0c0" stroke-width="0.7"/>
<rect x="501.4" y="162.2" width="21.6" height="58.6" fill="none" stroke="#8c3022" stroke-width="1.1"/>
<line x1="503.6" y1="161.2" x2="509.6" y2="161.2" stroke="#b2b2b2" stroke-width="0.9"/>
<line x1="506.6" y1="158.2" x2="506.6" y2="164.2" stroke="#b2b2b2" stroke-width="0.9"/>
<rect x="556.2" y="363.0" width="16.0" height="20.4" fill="#b03826"/>
<rect x="556.2" y="391.8" width="16.0" height="20.5" fill="#b03826"/>
<rect x="557.8" y="371.5" width="12.8" height="32.1" fill="none" stroke="#d2a096" stroke-width="1.2"/>
<rect x="557.8" y="397.4" width="12.8" height="2.2" fill="#dfaaa0"/>
<line x1="560.7" y1="387.8" x2="567.7" y2="387.8" stroke="#c0c0c0" stroke-width="0.7"/>
<line x1="564.2" y1="384.8" x2="564.2" y2="390.8" stroke="#c0c0c0" stroke-width="0.7"/>
<rect x="553.4" y="358.5" width="21.6" height="58.6" fill="none" stroke="#8c3022" stroke-width="1.1"/>
<line x1="566.8" y1="418.1" x2="572.8" y2="418.1" stroke="#b2b2b2" stroke-width="0.9"/>
<line x1="569.8" y1="415.1" x2="569.8" y2="421.1" stroke="#b2b2b2" stroke-width="0.9"/>
<rect x="399.2" y="376.1" width="16.0" height="20.4" fill="#b03826"/>
<rect x="399.2" y="404.9" width="16.0" height="20.5" fill="#b03826"/>
<rect x="400.8" y="384.6" width="12.8" height="32.1" fill="none" stroke="#d2a096" stroke-width="1.2"/>
<rect x="400.8" y="410.5" width="12.8" height="2.2" fill="#dfaaa0"/>
<line x1="403.7" y1="400.9" x2="410.7" y2="400.9" stroke="#c0c0c0" stroke-width="0.7"/>
<line x1="407.2" y1="397.9" x2="407.2" y2="403.9" stroke="#c0c0c0" stroke-width="0.7"/>
<rect x="396.4" y="371.6" width="21.6" height="58.6" fill="none" stroke="#8c3022" stroke-width="1.1"/>
<line x1="409.8" y1="431.2" x2="415.8" y2="431.2" stroke="#b2b2b2" stroke-width="0.9"/>
<line x1="412.8" y1="428.2" x2="412.8" y2="434.2" stroke="#b2b2b2" stroke-width="0.9"/>
<line x1="308.0" y1="101.5" x2="362.0" y2="103.5" stroke="#b09a3c" stroke-width="0.5" opacity="0.6"/>
<line x1="369.0" y1="122.0" x2="404.5" y2="155.0" stroke="#b09a3c" stroke-width="0.5" opacity="0.6"/>
<line x1="369.0" y1="122.0" x2="369.0" y2="205.0" stroke="#b09a3c" stroke-width="0.5" opacity="0.6"/>
<line x1="444.0" y1="113.0" x2="480.0" y2="113.0" stroke="#b09a3c" stroke-width="0.5" opacity="0.6"/>
<line x1="421.0" y1="120.0" x2="392.0" y2="235.0" stroke="#b09a3c" stroke-width="0.5" opacity="0.6"/>
<line x1="407.0" y1="165.0" x2="540.0" y2="270.0" stroke="#b09a3c" stroke-width="0.5" opacity="0.6"/>
<line x1="415.0" y1="168.0" x2="488.0" y2="182.0" stroke="#b09a3c" stroke-width="0.5" opacity="0.6"/>
<line x1="436.0" y1="131.6" x2="436.0" y2="276.0" stroke="#b09a3c" stroke-width="0.5" opacity="0.6"/>
<line x1="437.5" y1="136.0" x2="466.0" y2="280.0" stroke="#b09a3c" stroke-width="0.5" opacity="0.6"/>
<line x1="444.0" y1="184.0" x2="540.0" y2="210.0" stroke="#b09a3c" stroke-width="0.5" opacity="0.6"/>
<line x1="380.0" y1="270.6" x2="485.4" y2="232.0" stroke="#b09a3c" stroke-width="0.5" opacity="0.6"/>
<line x1="551.0" y1="195.0" x2="629.0" y2="233.5" stroke="#b09a3c" stroke-width="0.5" opacity="0.6"/>
<line x1="407.0" y1="165.0" x2="629.0" y2="254.0" stroke="#b09a3c" stroke-width="0.5" opacity="0.6"/>
<line x1="485.0" y1="152.0" x2="629.0" y2="254.0" stroke="#b09a3c" stroke-width="0.5" opacity="0.6"/>
<line x1="524.0" y1="341.0" x2="629.0" y2="312.4" stroke="#b09a3c" stroke-width="0.5" opacity="0.6"/>
<line x1="564.0" y1="335.0" x2="629.0" y2="333.2" stroke="#b09a3c" stroke-width="0.5" opacity="0.6"/>
<line x1="252.0" y1="323.6" x2="394.0" y2="258.0" stroke="#b09a3c" stroke-width="0.5" opacity="0.6"/>
<line x1="303.6" y1="270.6" x2="381.0" y2="349.0" stroke="#b09a3c" stroke-width="0.5" opacity="0.6"/>
<line x1="368.0" y1="295.0" x2="303.6" y2="348.6" stroke="#b09a3c" stroke-width="0.5" opacity="0.6"/>
<line x1="303.6" y1="376.6" x2="368.0" y2="323.0" stroke="#b09a3c" stroke-width="0.5" opacity="0.6"/>
<line x1="551.0" y1="143.0" x2="551.0" y2="162.0" stroke="#b09a3c" stroke-width="0.5" opacity="0.6"/>
<line x1="485.0" y1="139.6" x2="551.0" y2="130.0" stroke="#b09a3c" stroke-width="0.5" opacity="0.6"/>
<line x1="523.0" y1="113.0" x2="547.0" y2="111.0" stroke="#b09a3c" stroke-width="0.5" opacity="0.6"/>
<line x1="407.0" y1="180.0" x2="437.0" y2="270.0" stroke="#b09a3c" stroke-width="0.5" opacity="0.6"/>
<line x1="407.0" y1="180.0" x2="466.0" y2="336.0" stroke="#b09a3c" stroke-width="0.5" opacity="0.6"/>
<line x1="394.0" y1="258.0" x2="437.0" y2="231.0" stroke="#b09a3c" stroke-width="0.5" opacity="0.6"/>
<line x1="394.0" y1="258.0" x2="485.0" y2="336.0" stroke="#b09a3c" stroke-width="0.5" opacity="0.6"/>
<line x1="368.0" y1="324.0" x2="437.0" y2="270.3" stroke="#b09a3c" stroke-width="0.5" opacity="0.6"/>
<line x1="368.0" y1="234.0" x2="437.0" y2="244.0" stroke="#b09a3c" stroke-width="0.5" opacity="0.6"/>
<line x1="394.0" y1="228.0" x2="437.0" y2="152.5" stroke="#b09a3c" stroke-width="0.5" opacity="0.6"/>
<line x1="420.0" y1="310.0" x2="440.0" y2="310.0" stroke="#b09a3c" stroke-width="0.5" opacity="0.6"/>
<line x1="485.0" y1="257.4" x2="540.0" y2="285.0" stroke="#b09a3c" stroke-width="0.5" opacity="0.6"/>
<line x1="485.0" y1="244.3" x2="512.0" y2="296.0" stroke="#b09a3c" stroke-width="0.5" opacity="0.6"/>
<line x1="368.0" y1="295.0" x2="437.0" y2="257.0" stroke="#b09a3c" stroke-width="0.5" opacity="0.6"/>
<line x1="394.0" y1="349.0" x2="437.0" y2="362.0" stroke="#b09a3c" stroke-width="0.5" opacity="0.6"/>
<line x1="407.0" y1="385.0" x2="437.0" y2="375.0" stroke="#b09a3c" stroke-width="0.5" opacity="0.6"/>
<line x1="485.0" y1="375.2" x2="524.0" y2="387.0" stroke="#b09a3c" stroke-width="0.5" opacity="0.6"/>
<line x1="485.0" y1="362.0" x2="511.0" y2="361.0" stroke="#b09a3c" stroke-width="0.5" opacity="0.6"/>
<line x1="485.0" y1="348.9" x2="511.0" y2="335.0" stroke="#b09a3c" stroke-width="0.5" opacity="0.6"/>
<line x1="459.0" y1="414.0" x2="511.0" y2="414.0" stroke="#b09a3c" stroke-width="0.5" opacity="0.6"/>
<line x1="564.0" y1="339.0" x2="564.0" y2="370.0" stroke="#b09a3c" stroke-width="0.5" opacity="0.6"/>
<line x1="541.0" y1="387.5" x2="557.0" y2="380.0" stroke="#b09a3c" stroke-width="0.5" opacity="0.6"/>
<line x1="407.0" y1="413.0" x2="437.0" y2="414.0" stroke="#b09a3c" stroke-width="0.5" opacity="0.6"/>
<line x1="551.0" y1="286.0" x2="564.0" y2="306.0" stroke="#b09a3c" stroke-width="0.5" opacity="0.6"/>
<line x1="512.0" y1="305.0" x2="524.0" y2="327.0" stroke="#b09a3c" stroke-width="0.5" opacity="0.6"/>
<line x1="437.0" y1="348.9" x2="380.0" y2="310.0" stroke="#b09a3c" stroke-width="0.5" opacity="0.6"/>
<line x1="437.0" y1="178.7" x2="407.0" y2="150.0" stroke="#b09a3c" stroke-width="0.5" opacity="0.6"/>
<line x1="485.0" y1="165.5" x2="512.0" y2="175.0" stroke="#b09a3c" stroke-width="0.5" opacity="0.6"/>
<line x1="512.0" y1="210.0" x2="525.0" y2="240.0" stroke="#b09a3c" stroke-width="0.5" opacity="0.6"/>
<line x1="538.0" y1="244.0" x2="551.0" y2="255.0" stroke="#b09a3c" stroke-width="0.5" opacity="0.6"/>
<line x1="437.0" y1="139.6" x2="421.0" y2="115.0" stroke="#b09a3c" stroke-width="0.5" opacity="0.6"/>
<line x1="485.0" y1="231.2" x2="507.0" y2="234.0" stroke="#b09a3c" stroke-width="0.5" opacity="0.6"/>
<line x1="485.0" y1="270.3" x2="507.0" y2="254.0" stroke="#b09a3c" stroke-width="0.5" opacity="0.6"/>
<line x1="368.0" y1="128.0" x2="400.0" y2="150.0" stroke="#b09a3c" stroke-width="0.5" opacity="0.6"/>
<line x1="343.0" y1="320.0" x2="368.0" y2="300.0" stroke="#b09a3c" stroke-width="0.5" opacity="0.6"/>
<line x1="423.5" y1="180.0" x2="467.4" y2="287.6" stroke="#b09a3c" stroke-width="0.5" opacity="0.6"/>
<line x1="428.0" y1="180.0" x2="504.8" y2="250.0" stroke="#b09a3c" stroke-width="0.5" opacity="0.6"/>
<line x1="439.0" y1="186.6" x2="504.8" y2="230.5" stroke="#b09a3c" stroke-width="0.5" opacity="0.6"/>
<line x1="395.0" y1="272.0" x2="505.0" y2="189.0" stroke="#b09a3c" stroke-width="0.5" opacity="0.6"/>
<line x1="491.6" y1="180.0" x2="487.0" y2="281.0" stroke="#b09a3c" stroke-width="0.5" opacity="0.6"/>
<line x1="454.3" y1="202.0" x2="436.7" y2="224.0" stroke="#b09a3c" stroke-width="0.5" opacity="0.6"/>
<line x1="395.0" y1="262.0" x2="432.0" y2="252.0" stroke="#b09a3c" stroke-width="0.5" opacity="0.6"/>
<line x1="432.0" y1="252.0" x2="505.0" y2="262.0" stroke="#b09a3c" stroke-width="0.5" opacity="0.6"/>
<line x1="417.0" y1="113.0" x2="400.0" y2="150.0" stroke="#b09a3c" stroke-width="0.5" opacity="0.6"/>
<line x1="421.0" y1="120.0" x2="436.0" y2="131.6" stroke="#b09a3c" stroke-width="0.5" opacity="0.6"/>
<line x1="407.0" y1="180.0" x2="394.0" y2="228.0" stroke="#b09a3c" stroke-width="0.5" opacity="0.6"/>
<line x1="400.0" y1="150.0" x2="437.0" y2="165.5" stroke="#b09a3c" stroke-width="0.5" opacity="0.6"/>
<line x1="540.0" y1="270.0" x2="551.0" y2="286.0" stroke="#b09a3c" stroke-width="0.5" opacity="0.6"/>
<line x1="485.0" y1="178.7" x2="545.0" y2="205.0" stroke="#b09a3c" stroke-width="0.5" opacity="0.6"/>
<line x1="512.0" y1="175.0" x2="551.0" y2="162.0" stroke="#b09a3c" stroke-width="0.5" opacity="0.6"/>
<line x1="419.0" y1="320.0" x2="456.7" y2="390.0" stroke="#b09a3c" stroke-width="0.5" opacity="0.6"/>
<line x1="485.0" y1="375.2" x2="514.0" y2="413.0" stroke="#b09a3c" stroke-width="0.5" opacity="0.6"/>
<line x1="534.5" y1="390.0" x2="534.5" y2="407.0" stroke="#b09a3c" stroke-width="0.5" opacity="0.6"/>
<line x1="437.0" y1="334.0" x2="437.0" y2="376.0" stroke="#b09a3c" stroke-width="0.5" opacity="0.6"/>
<line x1="488.8" y1="320.0" x2="486.0" y2="348.0" stroke="#b09a3c" stroke-width="0.5" opacity="0.6"/>
<line x1="435.7" y1="373.8" x2="494.4" y2="350.0" stroke="#b09a3c" stroke-width="0.5" opacity="0.6"/>
<line x1="437.0" y1="373.0" x2="497.0" y2="381.5" stroke="#b09a3c" stroke-width="0.5" opacity="0.6"/>
<text class="v" transform="translate(478.3,102.7) scale(0.9,1)" x="-1.0" font-size="17.3" fill="#b2b2b2" stroke="#b2b2b2" textLength="22.3" lengthAdjust="spacing">C7</text>
<text class="v" transform="translate(421.0,139.5) scale(0.9,1)" x="-1.0" font-size="17.1" fill="#b2b2b2" stroke="#b2b2b2" textLength="23.2" lengthAdjust="spacing">R9</text>
<text class="v" transform="translate(474.1,205.6) scale(0.9,1)" x="-1.0" font-size="17.3" fill="#b2b2b2" stroke="#b2b2b2" textLength="23.1" lengthAdjust="spacing">U2</text>
<text class="v" transform="translate(439.2,299.2) scale(0.9,1)" x="-1.0" font-size="17.3" fill="#b2b2b2" stroke="#b2b2b2" textLength="22.3" lengthAdjust="spacing">C2</text>
<text class="v" transform="translate(474.0,299.2) scale(0.9,1)" x="-1.0" font-size="17.3" fill="#b2b2b2" stroke="#b2b2b2" textLength="21.6" lengthAdjust="spacing">U1</text>
<text class="v" transform="translate(498.9,283.2) scale(0.9,1)" x="-1.0" font-size="17.3" fill="#b2b2b2" stroke="#b2b2b2" textLength="34.6" lengthAdjust="spacing">C13</text>
<text class="v" transform="translate(498.9,322.3) scale(0.9,1)" x="-1.0" font-size="17.3" fill="#b2b2b2" stroke="#b2b2b2" textLength="53.3" lengthAdjust="spacing">0.01uF</text>
<text class="v" transform="translate(513.0,322.3) scale(0.9,1)" x="-1.0" font-size="17.3" fill="#b2b2b2" stroke="#b2b2b2" textLength="24.3" lengthAdjust="spacing">C3</text>
<text class="v" transform="translate(499.5,349.0) scale(0.9,1)" x="-1.1" font-size="18.1" fill="#b2b2b2" stroke="#b2b2b2" textLength="37.2" lengthAdjust="spacing">22K</text>
<text class="v" transform="translate(506.0,361.2) scale(0.9,1)" x="-1.0" font-size="16.7" fill="#b2b2b2" stroke="#b2b2b2" textLength="59.2" lengthAdjust="spacing">0.1uF</text>
<text class="v" transform="translate(513.0,374.2) scale(0.9,1)" x="-1.0" font-size="17.3" fill="#b2b2b2" stroke="#b2b2b2" textLength="28.1" lengthAdjust="spacing">R2</text>
<text class="v" transform="translate(513.0,388.0) scale(0.9,1)" x="-1.0" font-size="17.3" fill="#b2b2b2" stroke="#b2b2b2" textLength="27.1" lengthAdjust="spacing">R7</text>
<text class="v" transform="translate(512.0,440.3) scale(0.9,1)" x="-1.0" font-size="17.1" fill="#f0f0f0" stroke="#f0f0f0" textLength="23.6" lengthAdjust="spacing">R1</text>
<text class="v" transform="translate(392.4,334.5) scale(0.9,1)" x="-1.0" font-size="17.3" fill="#b2b2b2" stroke="#b2b2b2" textLength="25.3" lengthAdjust="spacing">R4</text>
<text class="v" transform="translate(381.2,374.7) scale(0.9,1)" x="-1.0" font-size="17.3" fill="#b2b2b2" stroke="#b2b2b2" textLength="23.9" lengthAdjust="spacing">R5</text>
<text class="v" transform="translate(439.1,403.3) scale(0.9,1)" x="-1.0" font-size="17.1" fill="#b2b2b2" stroke="#b2b2b2" textLength="22.3" lengthAdjust="spacing">C5</text>
<text class="v" transform="translate(473.4,402.8) scale(0.9,1)" x="-1.0" font-size="17.1" fill="#b2b2b2" stroke="#b2b2b2" textLength="23.8" lengthAdjust="spacing">U3</text>
<text class="v" transform="translate(354.8,120.0) rotate(-90) scale(0.9,1)" x="-1.0" font-size="17.1" fill="#b2b2b2" stroke="#b2b2b2" textLength="36.5" lengthAdjust="spacing">R11</text>
<text class="v" transform="translate(356.0,187.5) rotate(-90) scale(0.9,1)" x="-1.0" font-size="17.3" fill="#b2b2b2" stroke="#b2b2b2" textLength="48.9" lengthAdjust="spacing">33uF</text>
<text class="v" transform="translate(356.0,224.7) rotate(-90) scale(0.9,1)" x="-1.0" font-size="17.3" fill="#b2b2b2" stroke="#b2b2b2" textLength="42.4" lengthAdjust="spacing">R13</text>
<text class="v" transform="translate(392.3,181.7) rotate(-90) scale(0.9,1)" x="-1.0" font-size="17.3" fill="#b2b2b2" stroke="#b2b2b2" textLength="41.7" lengthAdjust="spacing">C16</text>
<text class="v" transform="translate(392.3,167.0) rotate(-90) scale(0.9,1)" x="-1.0" font-size="17.3" fill="#b2b2b2" stroke="#b2b2b2" textLength="25.4" lengthAdjust="spacing">C8</text>
<text class="v" transform="translate(393.8,223.3) rotate(-90) scale(0.9,1)" x="-1.0" font-size="16.5" fill="#b2b2b2" stroke="#b2b2b2" textLength="36.1" lengthAdjust="spacing">22K</text>
<text class="v" transform="translate(381.0,257.0) rotate(-90) scale(0.9,1)" x="-1.1" font-size="17.6" fill="#b2b2b2" stroke="#b2b2b2" textLength="34.0" lengthAdjust="spacing">C15</text>
<text class="v" transform="translate(419.5,257.0) rotate(-90) scale(0.9,1)" x="-1.0" font-size="17.1" fill="#b2b2b2" stroke="#b2b2b2" textLength="53.2" lengthAdjust="spacing">0.1uF</text>
<text class="v" transform="translate(434.3,179.0) rotate(-90) scale(0.9,1)" x="-1.1" font-size="18.2" fill="#b2b2b2" stroke="#b2b2b2" textLength="43.3" lengthAdjust="spacing">0.1u</text>
<text class="v" transform="translate(441.6,150.5) rotate(-90) scale(0.9,1)" x="-1.0" font-size="17.0" fill="#b2b2b2" stroke="#b2b2b2" textLength="15.4" lengthAdjust="spacing">C</text>
<text class="v" transform="translate(537.6,133.5) rotate(-90) scale(0.9,1)" x="-1.0" font-size="16.7" fill="#b2b2b2" stroke="#b2b2b2" textLength="25.0" lengthAdjust="spacing">R6</text>
<text class="v" transform="translate(538.2,186.0) rotate(-90) scale(0.9,1)" x="-1.1" font-size="17.8" fill="#b2b2b2" stroke="#b2b2b2" textLength="25.5" lengthAdjust="spacing">R3</text>
<text class="v" transform="translate(501.4,212.0) rotate(-90) scale(0.9,1)" x="-1.0" font-size="17.3" fill="#b2b2b2" stroke="#b2b2b2" textLength="24.3" lengthAdjust="spacing">C1</text>
<text class="v" transform="translate(558.4,244.0) rotate(-90) scale(0.9,1)" x="-1.1" font-size="19.1" fill="#b2b2b2" stroke="#b2b2b2" textLength="24.1" lengthAdjust="spacing">Q1</text>
<text class="v" transform="translate(603.8,246.8) rotate(-90) scale(0.9,1)" x="-1.1" font-size="18.5" fill="#b2b2b2" stroke="#b2b2b2" textLength="35.9" lengthAdjust="spacing">SP1</text>
<text class="v" transform="translate(577.0,283.9) rotate(-90) scale(0.9,1)" x="-1.0" font-size="17.1" fill="#b2b2b2" stroke="#b2b2b2" textLength="26.4" lengthAdjust="spacing">R8</text>
<text class="v" transform="translate(604.0,313.7) rotate(-90) scale(0.9,1)" x="-1.1" font-size="18.2" fill="#b2b2b2" stroke="#b2b2b2" textLength="23.2" lengthAdjust="spacing">B1</text>
<text class="v" transform="translate(590.3,348.4) rotate(-90) scale(0.9,1)" x="-1.0" font-size="17.1" fill="#b2b2b2" stroke="#b2b2b2" textLength="35.8" lengthAdjust="spacing">R12</text>
<text class="v" transform="translate(587.8,386.5) rotate(-90) scale(0.9,1)" x="-1.0" font-size="17.0" fill="#b2b2b2" stroke="#b2b2b2" textLength="22.6" lengthAdjust="spacing">C4</text>
<text class="v" transform="translate(552.8,408.0) rotate(-90) scale(0.9,1)" x="-1.0" font-size="16.5" fill="#b2b2b2" stroke="#b2b2b2" textLength="53.1" lengthAdjust="spacing">33uF</text>
<text class="v" transform="translate(393.8,334.5) rotate(-90) scale(0.9,1)" x="-1.0" font-size="17.3" fill="#b2b2b2" stroke="#b2b2b2" textLength="37.1" lengthAdjust="spacing">R10</text>
<text class="v" transform="translate(430.8,398.6) rotate(-90) scale(0.9,1)" x="-1.0" font-size="17.3" fill="#b2b2b2" stroke="#b2b2b2" textLength="21.4" lengthAdjust="spacing">C6</text>
</svg>
<svg id="chrome" width="913" height="501" viewBox="0 0 913 501">
<line x1="4.2" y1="9.0" x2="4.2" y2="20.0" stroke="#c2c2c2" stroke-width="0.7"/>
<line x1="5.4" y1="9.0" x2="5.4" y2="20.0" stroke="#cfcfcf" stroke-width="0.6"/>
<line x1="4.2" y1="23.0" x2="4.2" y2="34.0" stroke="#c2c2c2" stroke-width="0.7"/>
<line x1="5.4" y1="23.0" x2="5.4" y2="34.0" stroke="#cfcfcf" stroke-width="0.6"/>
<rect x="10.5" y="11.0" width="6.0" height="7.0" fill="#fafafa" stroke="#3a3a3a" stroke-width="0.9"/>
<path d="M15.5 18.2h3.2l-1.6 1.8z" fill="#111"/>
<line x1="12.0" y1="14.5" x2="15.0" y2="14.5" stroke="#3a3a3a" stroke-width="0.8"/>
<line x1="13.5" y1="13.0" x2="13.5" y2="16.0" stroke="#3a3a3a" stroke-width="0.8"/>
<rect x="24.3" y="10.8" width="7.4" height="7.6" fill="#3a3a3a" rx="0.8"/>
<rect x="26.0" y="10.8" width="4.0" height="2.8" fill="#e8e8e8"/>
<rect x="26.0" y="15.6" width="4.0" height="2.8" fill="#e8e8e8"/>
<rect x="39.0" y="13.6" width="8.4" height="3.4" fill="#666" rx="0.6"/>
<rect x="40.8" y="10.8" width="4.8" height="2.8" fill="#777"/>
<rect x="40.8" y="16.0" width="4.8" height="2.8" fill="#ddd" stroke="#555" stroke-width="0.5"/>
<rect x="53.5" y="11.6" width="8.0" height="6.2" fill="#4a5a68" rx="1.5"/>
<rect x="55.0" y="13.0" width="4.0" height="3.5" fill="#3e86c8" rx="0.8"/>
<line x1="65.5" y1="10.0" x2="65.5" y2="20.0" stroke="#c4c4c4" stroke-width="0.8"/>
<rect x="69.0" y="10.6" width="8.0" height="8.0" fill="#f0dada"/>
<rect x="69.0" y="10.6" width="8.0" height="3.4" fill="#e23a3a"/>
<rect x="70.0" y="15.2" width="6.0" height="2.8" fill="#d8a0a0"/>
<line x1="80.5" y1="10.0" x2="80.5" y2="20.0" stroke="#c4c4c4" stroke-width="0.8"/>
<rect x="84.0" y="12.0" width="2.0" height="5.8" fill="#555"/>
<rect x="84.0" y="11.0" width="2.0" height="1.4" fill="#2a2a2a"/>
<rect x="87.0" y="12.0" width="2.0" height="5.8" fill="#555"/>
<rect x="87.0" y="11.0" width="2.0" height="1.4" fill="#2a2a2a"/>
<rect x="90.0" y="12.0" width="2.0" height="5.8" fill="#555"/>
<rect x="90.0" y="11.0" width="2.0" height="1.4" fill="#2a2a2a"/>
<line x1="96.5" y1="10.0" x2="96.5" y2="20.0" stroke="#c4c4c4" stroke-width="0.8"/>
<rect x="100.0" y="10.6" width="7.4" height="7.2" fill="#2a78c8"/>
<path d="M105 18h3.4l-1.7 1.9z" fill="#111"/>
<text class="u" x="103.7" y="15.6" font-size="3.4" fill="#dbe9f8" text-anchor="middle" font-weight="bold">SCR</text>
<rect x="114.5" y="10.6" width="7.5" height="7.2" fill="#eda41e"/>
<path d="M119.8 18h3.4l-1.7 1.9z" fill="#111"/>
<text class="u" x="118.2" y="15.6" font-size="3.4" fill="#fbe9c8" text-anchor="middle" font-weight="bold">ULP</text>
<line x1="126.5" y1="10.0" x2="126.5" y2="20.0" stroke="#c4c4c4" stroke-width="0.8"/>
<circle cx="132.5" cy="13.8" r="2.6" fill="#f4f4f4" stroke="#3a3a3a" stroke-width="0.9"/>
<line x1="134.4" y1="15.7" x2="136.7" y2="18.2" stroke="#3a3a3a" stroke-width="1.3"/>
<line x1="131.1" y1="13.8" x2="133.9" y2="13.8" stroke="#3a3a3a" stroke-width="0.7"/>
<circle cx="147.5" cy="13.8" r="2.6" fill="#f4f4f4" stroke="#666" stroke-width="0.9"/>
<line x1="149.4" y1="15.7" x2="151.7" y2="18.2" stroke="#666" stroke-width="1.3"/>
<line x1="146.1" y1="13.8" x2="148.9" y2="13.8" stroke="#666" stroke-width="0.7"/>
<line x1="147.5" y1="12.4" x2="147.5" y2="15.2" stroke="#666" stroke-width="0.7"/>
<circle cx="162.5" cy="13.8" r="2.6" fill="#f4f4f4" stroke="#666" stroke-width="0.9"/>
<line x1="164.4" y1="15.7" x2="166.7" y2="18.2" stroke="#666" stroke-width="1.3"/>
<circle cx="177.3" cy="13.8" r="2.6" fill="#f4f4f4" stroke="#666" stroke-width="0.9"/>
<line x1="179.2" y1="15.7" x2="181.5" y2="18.2" stroke="#666" stroke-width="1.3"/>
<circle cx="192.2" cy="13.8" r="2.6" fill="#f4f4f4" stroke="#3a3a3a" stroke-width="0.9"/>
<line x1="194.1" y1="15.7" x2="196.4" y2="18.2" stroke="#3a3a3a" stroke-width="1.3"/>
<line x1="190.8" y1="13.8" x2="193.6" y2="13.8" stroke="#3a3a3a" stroke-width="0.7"/>
<path d="M195 18.6h3.4l-1.7 1.9z" fill="#111"/>
<line x1="200.8" y1="10.0" x2="200.8" y2="20.0" stroke="#c4c4c4" stroke-width="0.8"/>
<path d="M204.4 15.2l3-2.6v1.6c2.2-.3 3.8.6 4.4 2.8-1.2-1.3-2.6-1.6-4.4-1.3v1.7z" fill="#222"/>
<path d="M226.6 15.2l-3-2.6v1.6c-2.2-.3-3.8.6-4.4 2.8 1.2-1.3 2.6-1.6 4.4-1.3v1.7z" fill="#cfcfcf"/>
<line x1="230.5" y1="10.0" x2="230.5" y2="20.0" stroke="#c4c4c4" stroke-width="0.8"/>
<circle cx="238.2" cy="14.5" r="4" fill="#e8323c"/>
<rect x="235.6" y="13.8" width="5.2" height="1.5" fill="#fff"/>
<circle cx="253" cy="12.6" r="0.9" fill="#d0d0d0"/><circle cx="253" cy="16.2" r="1.3" fill="#b8b8b8"/>
<line x1="260.5" y1="10.0" x2="260.5" y2="20.0" stroke="#c4c4c4" stroke-width="0.8"/>
<circle cx="268.7" cy="14.5" r="3.9" fill="#161616"/>
<text class="u" x="268.7" y="16.9" font-size="6.4" fill="#fff" text-anchor="middle" font-weight="bold">?</text>
<line x1="279.6" y1="9.5" x2="279.6" y2="20.0" stroke="#bdbdbd" stroke-width="0.8"/>
<line x1="281.6" y1="9.5" x2="281.6" y2="20.0" stroke="#bdbdbd" stroke-width="0.8"/>
<rect x="286.4" y="9.5" width="26.0" height="10.8" fill="#dedede" stroke="#6e6e6e" stroke-width="0.8" rx="1.2"/>
<text class="u" x="294" y="14.2" font-size="3.6" fill="#e05565" font-weight="bold">design</text>
<text class="u" x="303.5" y="18.6" font-size="4.2" fill="#444" font-weight="bold">link</text>
<line x1="288.0" y1="17.6" x2="301.0" y2="17.6" stroke="#e8a0a8" stroke-width="0.5"/>
<rect x="322.4" y="9.5" width="25.8" height="10.8" fill="#dedede" stroke="#6e6e6e" stroke-width="0.8" rx="1.2"/>
<path d="M325 12.8h1.8v-1.6h2v1.6h1.8v6.2h-5.6z" fill="#e86a7a"/>
<text class="u" x="333.5" y="14.3" font-size="3.2" fill="#555" font-weight="bold">PCB</text>
<text class="u" x="333.5" y="18.3" font-size="3.2" fill="#555" font-weight="bold">QUOTE</text>
<rect x="358.4" y="9.5" width="25.4" height="10.8" fill="#dedede" stroke="#6e6e6e" stroke-width="0.8" rx="1.2"/>
<rect x="360.5" y="11.2" width="7.0" height="7.6" fill="#f6dede" stroke="#e0485a" stroke-width="0.9" rx="1"/>
<rect x="362.6" y="11.2" width="4.9" height="4.2" fill="none" stroke="#e0485a" stroke-width="0.8"/>
<text class="u" x="370.5" y="14.3" font-size="3.2" fill="#555" font-weight="bold">IDF</text>
<text class="u" x="370.5" y="18.3" font-size="3.2" fill="#555" font-weight="bold">TO 3D</text>
<rect x="391.0" y="9.5" width="31.4" height="10.8" fill="#e6e6e6" stroke="#c8c8c8" stroke-width="0.8" rx="1.2"/>
<rect x="426.8" y="9.5" width="31.8" height="10.8" fill="#e6e6e6" stroke="#c8c8c8" stroke-width="0.8" rx="1.2"/>
<path d="M394.2 17.8l2.2-5.8h1.6l2.2 5.8h-1.7l-1.3-3.8-1.3 3.8z" fill="#161616"/>
<path d="M430 17.8l2.2-5.8h1.6l2.2 5.8h-1.7l-1.3-3.8-1.3 3.8z" fill="#161616"/>
<text class="u" x="403.4" y="17" font-size="5.4" fill="#3c3c3c" font-weight="bold" textLength="14.8" lengthAdjust="spacingAndGlyphs">MAKE</text>
<text class="u" x="439.3" y="17" font-size="5.4" fill="#3c3c3c" font-weight="bold" textLength="15.6" lengthAdjust="spacingAndGlyphs">MCAD</text>
<rect x="9.6" y="24.6" width="7.0" height="7.0" fill="#f8f8f8" stroke="#333" stroke-width="0.8"/>
<line x1="11.9" y1="24.6" x2="11.9" y2="31.6" stroke="#333" stroke-width="0.7"/>
<line x1="9.6" y1="26.9" x2="16.6" y2="26.9" stroke="#333" stroke-width="0.7"/>
<line x1="14.3" y1="24.6" x2="14.3" y2="31.6" stroke="#333" stroke-width="0.7"/>
<line x1="9.6" y1="29.3" x2="16.6" y2="29.3" stroke="#333" stroke-width="0.7"/>
<path d="M15.4 31.4h3.4l-1.7 1.9z" fill="#111"/>
<line x1="7.2" y1="38.5" x2="25.6" y2="38.5" stroke="#9cb2cc" stroke-width="0.6"/>
<line x1="7.2" y1="40.1" x2="25.6" y2="40.1" stroke="#b8c6d8" stroke-width="0.6"/>
<circle cx="8.6" cy="48.9" r="3.9" fill="#1c1c1c"/>
<rect x="7.7" y="46.3" width="1.8" height="5.2" fill="#eee" rx="0.8"/>
<ellipse cx="23.5" cy="48.9" rx="3.9" ry="2.4" fill="#f2f2f2" stroke="#222" stroke-width="1"/><circle cx="23.5" cy="48.9" r="1.3" fill="#222"/>
<rect x="5.0" y="57.6" width="3.2" height="3.0" fill="#2a6cc0"/>
<rect x="7.6" y="60.2" width="3.0" height="2.8" fill="#c83232"/>
<path d="M9 63h4l-2 2z" fill="#1a6a2a"/>
<path d="M10.6 62.8h3.2l-1.6 1.8z" fill="#111"/>
<line x1="22.0" y1="57.0" x2="22.0" y2="65.0" stroke="#555" stroke-width="0.8"/>
<line x1="20.0" y1="63.0" x2="26.5" y2="63.0" stroke="#555" stroke-width="0.8"/>
<line x1="23.0" y1="60.0" x2="26.0" y2="60.0" stroke="#555" stroke-width="0.8"/>
<line x1="24.5" y1="58.5" x2="24.5" y2="61.5" stroke="#555" stroke-width="0.8"/>
<line x1="3.0" y1="69.6" x2="29.0" y2="69.6" stroke="#c6c6c6" stroke-width="0.8"/>
<rect x="2.4" y="71.6" width="12.8" height="11.6" fill="#bcd6ef"/>
<rect x="5.2" y="74.8" width="4.6" height="3.4" fill="none" stroke="#333" stroke-width="0.8"/>
<path d="M9.2 77.2l3.2 2.6-1.5.2.8 1.6-.9.4-.8-1.6-1 .9z" fill="#111"/>
<circle cx="23.5" cy="74.1" r="0.9" fill="#333"/>
<circle cx="23.5" cy="80.5" r="0.9" fill="#333"/>
<circle cx="20.1" cy="77.3" r="0.9" fill="#333"/>
<circle cx="26.9" cy="77.3" r="0.9" fill="#333"/>
<circle cx="23.5" cy="77.3" r="0.6" fill="#333"/>
<path d="M7.8 86v6.4l-3.4 0z" fill="#444"/><path d="M9.4 86v6.4l3.4 0z" fill="#888"/>
<path d="M20.7 89a3 3 0 1 1 2.6 3.4" fill="none" stroke="#333" stroke-width="1"/><path d="M19.1 88.4l1.8 2.4 1.6-2.6z" fill="#333"/>
<line x1="5.8" y1="97.4" x2="5.8" y2="104.8" stroke="#333" stroke-width="0.8"/>
<rect x="6.8" y="98.4" width="5.6" height="1.4" fill="#333"/>
<rect x="6.8" y="102.0" width="3.8" height="1.4" fill="#333"/>
<rect x="5.6" y="109.6" width="5.6" height="6.8" fill="#f4f4f4" stroke="#555" stroke-width="0.8"/>
<rect x="7.0" y="108.8" width="3.0" height="1.8" fill="#777"/>
<rect x="19.6" y="109.0" width="5.4" height="6.0" fill="#333" rx="0.6"/>
<rect x="22.0" y="111.4" width="4.6" height="5.2" fill="#f4f4f4" stroke="#333" stroke-width="0.7"/>
<rect x="5.8" y="122.8" width="5.6" height="6.0" fill="#1e1e1e" rx="0.8"/>
<rect x="5.0" y="121.4" width="7.2" height="1.2" fill="#1e1e1e"/>
<rect x="7.4" y="120.6" width="2.4" height="1.0" fill="#1e1e1e"/>
<path d="M19.9 128.6l4.2-4.4a2.4 2.4 0 0 1 3-3l-1.5 1.6 1 1 1.6-1.5a2.4 2.4 0 0 1-3 3l-4.3 4.3z" fill="#1a1a1a"/>
<rect x="4.8" y="133.4" width="3.8" height="3.6" fill="#c03030"/>
<rect x="7.4" y="136.0" width="4.6" height="4.6" fill="#2a7a3a"/>
<path d="M8.6 138.4h2.6v-1l1.6 1.6-1.6 1.6v-1h-2.6z" fill="#fff"/>
<line x1="19.6" y1="134.6" x2="26.4" y2="134.6" stroke="#333" stroke-width="0.8"/>
<line x1="19.6" y1="137.0" x2="26.4" y2="137.0" stroke="#333" stroke-width="0.8"/>
<rect x="22.0" y="135.6" width="3.4" height="4.0" fill="none" stroke="#333" stroke-width="0.8"/>
<path d="M24.6 139.4h3.2l-1.6 1.8z" fill="#111"/>
<path d="M11 145.4h-3.4l-2 3.2 2 3.2h3.4" fill="none" stroke="#444" stroke-width="0.9"/>
<line x1="9.4" y1="147.2" x2="9.4" y2="150.0" stroke="#444" stroke-width="0.8"/>
<path d="M20.4 151v-3a2.6 2.6 0 0 1 5.2 0v1" fill="none" stroke="#222" stroke-width="1.1"/>
<path d="M24.4 150.6h3.2l-1.6 1.8z" fill="#111"/>
<rect x="19.4" y="150.0" width="2.6" height="1.6" fill="#222"/>
<rect x="5.4" y="160.4" width="6.4" height="5.0" fill="#1e1e1e" rx="0.8"/>
<path d="M6.8 160.4v-1.6a1.8 1.8 0 0 1 3.6 0v1.6" fill="none" stroke="#1e1e1e" stroke-width="1.1"/>
<line x1="6.0" y1="170.0" x2="9.0" y2="170.0" stroke="#999" stroke-width="0.8"/>
<line x1="6.0" y1="172.4" x2="9.0" y2="172.4" stroke="#999" stroke-width="0.8"/>
<line x1="6.0" y1="174.8" x2="9.0" y2="174.8" stroke="#999" stroke-width="0.8"/>
<line x1="7.5" y1="169.0" x2="7.5" y2="177.0" stroke="#aaa" stroke-width="0.7"/>
<line x1="20.4" y1="170.0" x2="23.4" y2="170.0" stroke="#666" stroke-width="0.8"/>
<line x1="20.4" y1="172.4" x2="23.4" y2="172.4" stroke="#666" stroke-width="0.8"/>
<line x1="20.4" y1="174.8" x2="23.4" y2="174.8" stroke="#666" stroke-width="0.8"/>
<path d="M23 175.6h3.6l-1.8 2z" fill="#111"/>
<line x1="5.0" y1="185.0" x2="11.6" y2="185.0" stroke="#555" stroke-width="0.9"/>
<line x1="7.0" y1="182.6" x2="7.0" y2="187.6" stroke="#555" stroke-width="0.9"/>
<line x1="9.2" y1="183.4" x2="12.0" y2="183.4" stroke="#777" stroke-width="0.8"/>
<line x1="9.2" y1="186.8" x2="12.0" y2="186.8" stroke="#777" stroke-width="0.8"/>
<path d="M20 189v-4.4a3 3 0 0 1 3-3h4" fill="none" stroke="#666" stroke-width="1"/><path d="M21.6 189v-3.4a2 2 0 0 1 2-2h3.4" fill="none" stroke="#999" stroke-width="0.8"/>
<path d="M5.2 201v-5l2-2.4h4.6v7.4z" fill="#8a8a8a" stroke="#666" stroke-width="0.6"/>
<circle cx="23.5" cy="197" r="0.7" fill="#555"/>
<line x1="20.5" y1="195.0" x2="22.1" y2="196.2" stroke="#888" stroke-width="0.6"/>
<line x1="26.5" y1="195.0" x2="24.9" y2="196.2" stroke="#888" stroke-width="0.6"/>
<path d="M5 212v-5.4a1.4 1.4 0 0 1 2.8 0v4.2a1.4 1.4 0 0 0 2.8 0v-5.2" fill="none" stroke="#555" stroke-width="0.9"/>
<line x1="20.0" y1="206.4" x2="22.6" y2="206.4" stroke="#777" stroke-width="0.8"/>
<line x1="24.2" y1="206.4" x2="26.8" y2="206.4" stroke="#777" stroke-width="0.8"/>
<line x1="20.0" y1="208.8" x2="22.6" y2="208.8" stroke="#777" stroke-width="0.8"/>
<line x1="24.2" y1="208.8" x2="26.8" y2="208.8" stroke="#777" stroke-width="0.8"/>
<line x1="20.0" y1="211.2" x2="22.6" y2="211.2" stroke="#777" stroke-width="0.8"/>
<line x1="24.2" y1="211.2" x2="26.8" y2="211.2" stroke="#777" stroke-width="0.8"/>
<line x1="23.4" y1="205.0" x2="23.4" y2="213.0" stroke="#999" stroke-width="0.6"/>
<path d="M5 217l2.4.4 3.6 5.6 1.8.6" fill="none" stroke="#2a8a3a" stroke-width="1.5"/><circle cx="5.4" cy="217" r="1" fill="#2a6cc0"/>
<path d="M19.6 217l2.4.4 3.6 5.6 1.8.6" fill="none" stroke="#2a8a3a" stroke-width="1.5"/><path d="M21 217l5 5" stroke="#d03030" stroke-width="0.9" stroke-dasharray="1.2 0.8"/>
<line x1="3.0" y1="229.0" x2="29.0" y2="229.0" stroke="#c6c6c6" stroke-width="0.8"/>
<line x1="5.0" y1="240.4" x2="9.0" y2="240.4" stroke="#222" stroke-width="1"/>
<line x1="9.0" y1="240.4" x2="12.0" y2="233.6" stroke="#222" stroke-width="1"/>
<text class="u" x="23.5" y="240.6" font-size="9" fill="#111" text-anchor="middle" font-family="Liberation Serif, serif" font-weight="bold">T</text>
<circle cx="8.6" cy="248.8" r="3.1" fill="none" stroke="#222" stroke-width="1"/>
<path d="M20.1 249.6q3.4-3.6 6.8 0" fill="none" stroke="#222" stroke-width="1.1"/>
<rect x="5.6" y="257.0" width="5.8" height="7.8" fill="#1c1c1c"/>
<path d="M20 264.6v-5l2.4-2.6h4.2v7.6z" fill="#f2f2f2" stroke="#555" stroke-width="0.8"/>
<ellipse cx="8.6" cy="270.4" rx="3.6" ry="1.3" fill="#2a8a3a" stroke="#1a5a2a" stroke-width="0.4"/>
<ellipse cx="8.6" cy="272.6" rx="3.6" ry="1.3" fill="#3aa04a" stroke="#1a5a2a" stroke-width="0.4"/>
<ellipse cx="8.6" cy="274.8" rx="3.6" ry="1.3" fill="#2a8a3a" stroke="#1a5a2a" stroke-width="0.4"/>
<line x1="20.0" y1="272.6" x2="27.0" y2="272.6" stroke="#7aa040" stroke-width="0.9"/>
<circle cx="20.2" cy="272.6" r="1.1" fill="#e0b020"/><circle cx="26.8" cy="272.6" r="1.1" fill="#e0b020"/>
<ellipse cx="8.6" cy="283.4" rx="3.6" ry="1.4" fill="#999" stroke="#444" stroke-width="0.6"/><ellipse cx="8.6" cy="285.6" rx="3.6" ry="1.4" fill="#bbb" stroke="#444" stroke-width="0.6"/>
<rect x="20.2" y="282.0" width="5.8" height="5.4" fill="#666" rx="0.6"/>
<rect x="21.4" y="283.2" width="3.4" height="3.0" fill="#ccc"/>
<line x1="19.0" y1="283.4" x2="20.2" y2="283.4" stroke="#444" stroke-width="0.6"/>
<line x1="26.0" y1="285.6" x2="27.6" y2="285.6" stroke="#444" stroke-width="0.6"/>
<line x1="5.4" y1="296.2" x2="11.8" y2="296.2" stroke="#222" stroke-width="0.9"/>
<path d="M4.6 296.2l2.2-1.7v3.4z M12.6 296.2l-2.2-1.7v3.4z" fill="#222"/>
<line x1="3.0" y1="304.6" x2="29.0" y2="304.6" stroke="#c6c6c6" stroke-width="0.8"/>
<line x1="8.6" y1="313.0" x2="11.8" y2="313.0" stroke="#555" stroke-width="0.5"/>
<circle cx="11.8" cy="313.0" r="0.8" fill="#222"/>
<line x1="8.6" y1="313.0" x2="10.2" y2="315.8" stroke="#555" stroke-width="0.5"/>
<circle cx="10.2" cy="315.8" r="0.8" fill="#222"/>
<line x1="8.6" y1="313.0" x2="7.0" y2="315.8" stroke="#555" stroke-width="0.5"/>
<circle cx="7.0" cy="315.8" r="0.8" fill="#222"/>
<line x1="8.6" y1="313.0" x2="5.4" y2="313.0" stroke="#555" stroke-width="0.5"/>
<circle cx="5.4" cy="313.0" r="0.8" fill="#222"/>
<line x1="8.6" y1="313.0" x2="7.0" y2="310.2" stroke="#555" stroke-width="0.5"/>
<circle cx="7.0" cy="310.2" r="0.8" fill="#222"/>
<line x1="8.6" y1="313.0" x2="10.2" y2="310.2" stroke="#555" stroke-width="0.5"/>
<circle cx="10.2" cy="310.2" r="0.8" fill="#222"/>
<path d="M20 310.4l2.6.4 3 4.8 1.8.6" fill="none" stroke="#2a78b8" stroke-width="1.6"/><circle cx="20.4" cy="310.4" r="1" fill="#2a8a3a"/>
<text class="u" x="20.6" y="317.4" font-size="3.6" fill="#222">A</text>
<rect x="4.8" y="321.4" width="7.4" height="7.4" fill="#2f8a3f"/>
<rect x="6.6" y="323.2" width="3.8" height="3.8" fill="none" stroke="#9ad0a0" stroke-width="0.7"/>
<text class="u" x="5" y="336" font-size="3.3" fill="#222" font-weight="bold">ERC</text><text class="u" x="19.6" y="336" font-size="3.3" fill="#222" font-weight="bold">DRC</text>
<path d="M6 338.6l1.8 1.8 3.4-3.2" fill="none" stroke="#2a9a3a" stroke-width="1.3"/><path d="M21 338.6l1.8 1.8 3.4-3.2" fill="none" stroke="#2a9a3a" stroke-width="1.3"/>
<path d="M8.6 345l4 7h-8z" fill="#f2b01e"/>
<rect x="8.1" y="347.4" width="1.0" height="2.4" fill="#222"/>
<rect x="8.1" y="350.4" width="1.0" height="0.8" fill="#222"/>
<path d="M908.8 38.8l1.6 1.6 1.6-1.6" fill="none" stroke="#666" stroke-width="0.7"/>
<path d="M893.6 492.4l-3 4h2l-1 3 3.4-4.2h-2.2z" fill="#3a9a2e"/>
<circle cx="901.6" cy="496" r="3.2" fill="#1a1a1a"/><rect x="900.9" y="493.8" width="1.4" height="4.4" rx="0.7" fill="#eee"/>
<rect x="909.4" y="493.4" width="3.6" height="1.6" fill="#2a78c8"/><rect x="909.4" y="493.4" width="1.4" height="5.4" fill="#2a78c8"/>
</svg>
<div id="fusion" class="abs"><i><b>F</b></i><span>FUSION SYNC</span></div>
</body></html>
